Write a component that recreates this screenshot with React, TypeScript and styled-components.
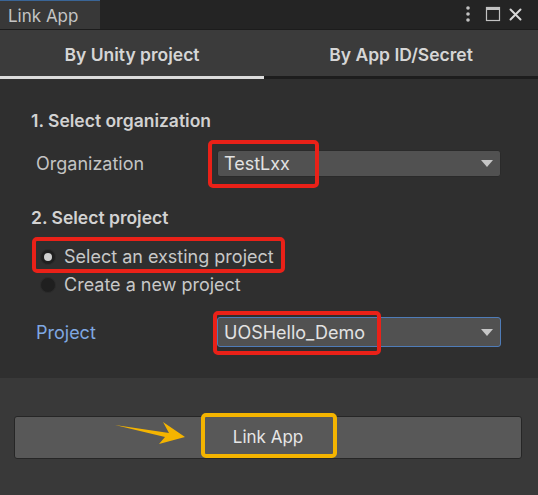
import styled, { createGlobalStyle } from "styled-components";

const GlobalStyle = createGlobalStyle`
  html, body {
    margin: 0;
    padding: 0;
    background: #2e2e2e;
  }
  * { box-sizing: border-box; }
`;

const Window = styled.div`
  width: 538px;
  height: 495px;
  display: flex;
  flex-direction: column;
  font-family: Inter, "Noto Sans", "Liberation Sans", sans-serif;
  color: #c8c8c8;
  overflow: hidden;
`;

const TitleBar = styled.div`
  height: 30px;
  display: flex;
  align-items: flex-end;
  background: #242424;
  border-bottom: 1px solid #1c1c1c;
`;

const TitleTab = styled.div`
  width: 100px;
  height: 30px;
  padding: 2px 0 0 8px;
  background: #383838;
  border-top: 2px solid #3a6596;
  font-size: 17px;
  line-height: 26px;
  color: #c4c4c4;
`;

const WindowControls = styled.div`
  margin-left: auto;
  height: 30px;
  display: flex;
  align-items: center;
  gap: 8px;
  padding-right: 16px;
  color: #c2c2c2;
`;

const TabBar = styled.div`
  height: 49px;
  display: grid;
  grid-template-columns: 264px 1fr;
  background: #3b3b3b;
`;

const Tab = styled.div<{ $active?: boolean }>`
  display: flex;
  align-items: center;
  justify-content: center;
  padding-top: 2px;
  font-size: 17.5px;
  font-weight: 600;
  color: #d6d6d6;
  border-bottom: 3px solid ${(p) => (p.$active ? "#dcdcdc" : "#1d1d1d")};
`;

const Content = styled.div`
  flex: 1;
  background: #2f2f2f;
  padding: 31px 37px 0 31px;
  display: flex;
  flex-direction: column;
`;

const SectionTitle = styled.div<{ $gap: number }>`
  font-size: 17.5px;
  font-weight: 600;
  line-height: 22px;
  color: #d2d2d2;
  margin-bottom: ${(p) => p.$gap}px;
`;

const FieldRow = styled.div<{ $mb: number }>`
  display: grid;
  grid-template-columns: 181px 1fr;
  align-items: center;
  padding-left: 5px;
  margin-bottom: ${(p) => p.$mb}px;
`;

const FieldLabel = styled.div<{ $focused?: boolean }>`
  font-size: 18px;
  color: ${(p) => (p.$focused ? "#7fa8e2" : "#c4c4c4")};
`;

const Dropdown = styled.div<{ $focused?: boolean }>`
  position: relative;
  height: ${(p) => (p.$focused ? 30 : 27)}px;
  display: flex;
  align-items: center;
  padding: 0 7px 0 6px;
  background: #515151;
  border: 1px solid ${(p) => (p.$focused ? "#4f7cb8" : "#2a2a2a")};
  border-radius: 3px;
  font-size: 18px;
  color: #e2e2e2;
`;

const Caret = styled.span`
  margin-left: auto;
  width: 0;
  height: 0;
  border-left: 6px solid transparent;
  border-right: 6px solid transparent;
  border-top: 7px solid #c6c6c6;
`;

const RadioRow = styled.label<{ $mb: number }>`
  position: relative;
  display: flex;
  align-items: center;
  gap: 8px;
  height: 27px;
  padding-left: 9px;
  margin-bottom: ${(p) => p.$mb}px;
  font-size: 18px;
  color: #c8c8c8;
`;

const RadioDot = styled.span<{ $checked?: boolean }>`
  width: 16px;
  height: 16px;
  border-radius: 50%;
  background: #1f1f1f;
  border: 1px solid #2b2b2b;
  display: flex;
  align-items: center;
  justify-content: center;
  &::after {
    content: "";
    width: 8px;
    height: 8px;
    border-radius: 50%;
    background: ${(p) => (p.$checked ? "#cfcfcf" : "transparent")};
  }
`;

const Highlight = styled.span<{ $top: number; $left: number; $w: number; $h: number; $color: string }>`
  position: absolute;
  top: ${(p) => p.$top}px;
  left: ${(p) => p.$left}px;
  width: ${(p) => p.$w}px;
  height: ${(p) => p.$h}px;
  border: 4px solid ${(p) => p.$color};
  border-radius: 5px;
  pointer-events: none;
`;

const Footer = styled.div`
  height: 117px;
  background: #393939;
  padding: 38px 16px 0 14px;
`;

const LinkButton = styled.button`
  position: relative;
  width: 100%;
  height: 43px;
  background: #585858;
  border: 1px solid #262626;
  border-radius: 3px;
  font-family: inherit;
  font-size: 17px;
  color: #e6e6e6;
  display: flex;
  align-items: center;
  justify-content: center;
  padding: 0 0 2px;
`;

const Arrow = styled.svg`
  position: absolute;
  left: 100px;
  top: 3px;
`;

function App() {
  return (
    <>
      <GlobalStyle />
      <Window>
        <TitleBar>
          <TitleTab>Link App</TitleTab>
          <WindowControls>
            <svg width="6" height="18" viewBox="0 0 6 18">
              <circle cx="3" cy="3" r="1.8" fill="currentColor" />
              <circle cx="3" cy="9" r="1.8" fill="currentColor" />
              <circle cx="3" cy="15" r="1.8" fill="currentColor" />
            </svg>
            <svg width="16" height="16" viewBox="0 0 16 16" style={{ marginLeft: 6 }}>
              <rect x="1.5" y="1.5" width="13" height="13" fill="none" stroke="currentColor" strokeWidth="1.2" />
              <rect x="1.5" y="1.5" width="13" height="2.5" fill="currentColor" />
            </svg>
            <svg width="13" height="13" viewBox="0 0 13 13">
              <path d="M1.5 1.5 L11.5 11.5 M11.5 1.5 L1.5 11.5" stroke="#d8d8d8" strokeWidth="2" strokeLinecap="round" />
            </svg>
          </WindowControls>
        </TitleBar>

        <TabBar>
          <Tab $active>By Unity project</Tab>
          <Tab>By App ID/Secret</Tab>
        </TabBar>

        <Content>
          <SectionTitle $gap={18}>1. Select organization</SectionTitle>
          <FieldRow $mb={30}>
            <FieldLabel>Organization</FieldLabel>
            <Dropdown>
              TestLxx
              <Caret />
              <Highlight $top={-11} $left={-10} $w={111} $h={48} $color="#ea2118" />
            </Dropdown>
          </FieldRow>

          <SectionTitle $gap={14}>2. Select project</SectionTitle>
          <RadioRow $mb={1}>
            <RadioDot $checked />
            Select an exsting project
            <Highlight $top={-6} $left={1} $w={253} $h={36} $color="#ea2118" />
          </RadioRow>
          <RadioRow $mb={19}>
            <RadioDot />
            Create a new project
          </RadioRow>

          <FieldRow $mb={0}>
            <FieldLabel $focused>Project</FieldLabel>
            <Dropdown $focused>
              UOSHello_Demo
              <Caret />
              <Highlight $top={-7} $left={-5} $w={168} $h={44} $color="#ea2118" />
            </Dropdown>
          </FieldRow>
        </Content>

        <Footer>
          <LinkButton>
            <Arrow width="72" height="26" viewBox="0 0 72 26">
              <path d="M0 5 L54 13 L48 2 L70 17 L44 24 L50 17 Z" fill="#f4b400" />
            </Arrow>
            Link App
            <Highlight $top={-4} $left={186} $w={136} $h={45} $color="#f4b400" />
          </LinkButton>
        </Footer>
      </Window>
    </>
  );
}

export default App;
